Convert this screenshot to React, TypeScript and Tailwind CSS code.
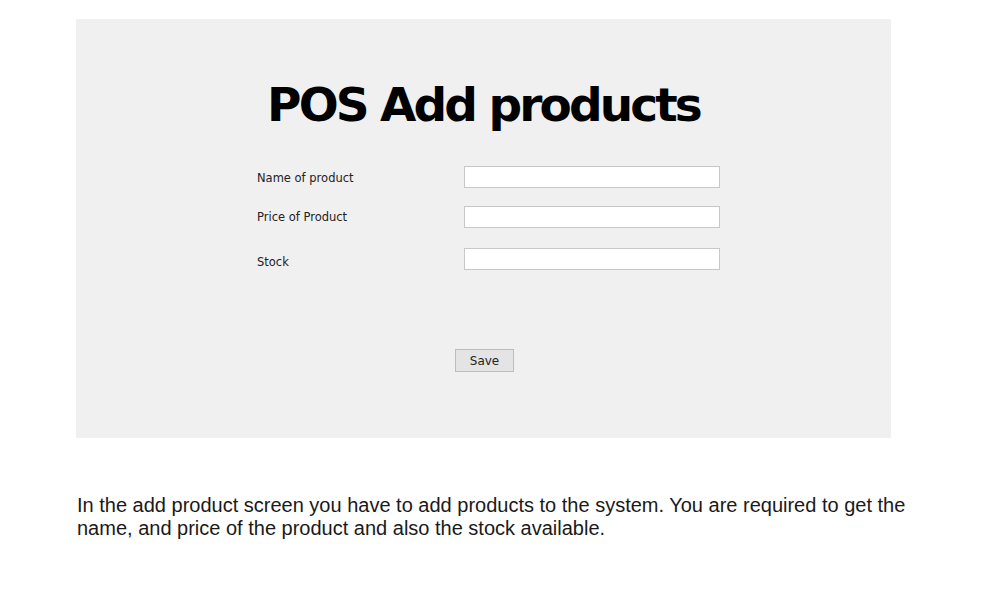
export default function App() {
  return (
    <div className="min-h-[595px] w-[997px] bg-white">
      <div className="pt-[19px] pl-[76px]">
        <section className="flex h-[419px] w-[815px] flex-col items-center bg-[#f0f0f0] font-['DejaVu_Sans',sans-serif]">
          <h1 className="mt-[54px] text-[47px] font-bold leading-[64px] tracking-[-2.9px] text-black">
            POS Add products
          </h1>

          <div className="mt-[29px] ml-[10px] flex w-[463px] flex-col text-[11.5px] text-[#222]">
            <Field label="Name of product" labelOffset="pt-[4px]" />
            <Field label="Price of Product" className="mt-[18px]" labelOffset="pt-[2px]" />
            <Field label="Stock" className="mt-[19px]" labelOffset="pt-[7px]" />
          </div>

          <button className="mt-[78px] ml-[2px] h-[23px] w-[59px] border border-[#bdbdbd] bg-[#e4e4e4] text-[12px] text-[#222]">
            Save
          </button>
        </section>
      </div>

      <p className="mt-[56px] ml-[77px] w-[860px] font-['Liberation_Sans',Arial,sans-serif] text-[20px] leading-[23px] text-[#1a1a1a]">
        In the add product screen you have to add products to the system. You are required to get the
        name, and price of the product and also the stock available.
      </p>
    </div>
  );
}

function Field({
  label,
  className = "",
  labelOffset = "",
}: {
  label: string;
  className?: string;
  labelOffset?: string;
}) {
  return (
    <div className={`flex items-center justify-between ${className}`}>
      <span className={labelOffset}>{label}</span>
      <input className="h-[22px] w-[256px] border border-[#c8c8c8] bg-white outline-none" />
    </div>
  );
}
